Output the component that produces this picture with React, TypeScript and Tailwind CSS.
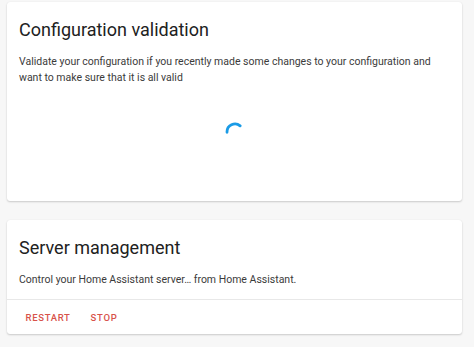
import React from 'react';

const font = { fontFamily: 'Roboto, "Noto Sans", Arial, sans-serif' };

const Spinner: React.FC = () => {
  // arc from 180deg to ~308deg, r=8
  const r = 8;
  const cx = 10;
  const cy = 10;
  const a1 = (178 * Math.PI) / 180;
  const a2 = (310 * Math.PI) / 180;
  const d = `M ${cx + r * Math.cos(a1)} ${cy + r * Math.sin(a1)} A ${r} ${r} 0 0 1 ${cx + r * Math.cos(a2)} ${cy + r * Math.sin(a2)}`;
  return (
    <svg width="20" height="20" viewBox="0 0 20 20" className="block">
      <path d={d} fill="none" stroke="#1a9be6" strokeWidth="2.8" strokeLinecap="round" />
    </svg>
  );
};

const Card: React.FC<{ children: React.ReactNode; className?: string }> = ({ children, className }) => (
  <div
    className={`bg-white rounded-[3px] shadow-[0_1px_2px_rgba(0,0,0,0.18),0_0_1px_rgba(0,0,0,0.08)] ${className ?? ''}`}
  >
    {children}
  </div>
);

export default function App() {
  return (
    <div className="w-[474px] h-[347px] bg-[#f7f7f7] pl-[7px] pr-[12px] pt-[2px] overflow-hidden" style={font}>
      <Card className="h-[199px] pt-[14px] px-[12px]">
        <h1 className="text-[18px] leading-[28px] text-[#212121] font-normal">Configuration validation</h1>
        <p className="mt-[10px] text-[10.5px] leading-[15.5px] text-[#3b3b3b]">
          Validate your configuration if you recently made some changes to your configuration and want to make sure that it is all valid
        </p>
        <div className="mt-[37px] flex justify-center pl-[1px]">
          <Spinner />
        </div>
      </Card>

      <Card className="mt-[19px] h-[114px]">
        <div className="pt-[14px] px-[12px] pb-[11px] border-b border-[#e8e8e8]">
          <h2 className="text-[18px] leading-[28px] text-[#212121] font-normal">Server management</h2>
          <p className="mt-[10px] text-[10.5px] leading-[15.5px] text-[#3b3b3b]">
            Control your Home Assistant server… from Home Assistant.
          </p>
        </div>
        <div className="flex items-center h-[36px] pl-[18.5px] gap-[20px] pt-[1px]">
          <button className="text-[9.5px] font-medium tracking-[0.7px] text-[#d8534a]">RESTART</button>
          <button className="text-[9.5px] font-medium tracking-[0.7px] text-[#d8534a]">STOP</button>
        </div>
      </Card>
    </div>
  );
}
